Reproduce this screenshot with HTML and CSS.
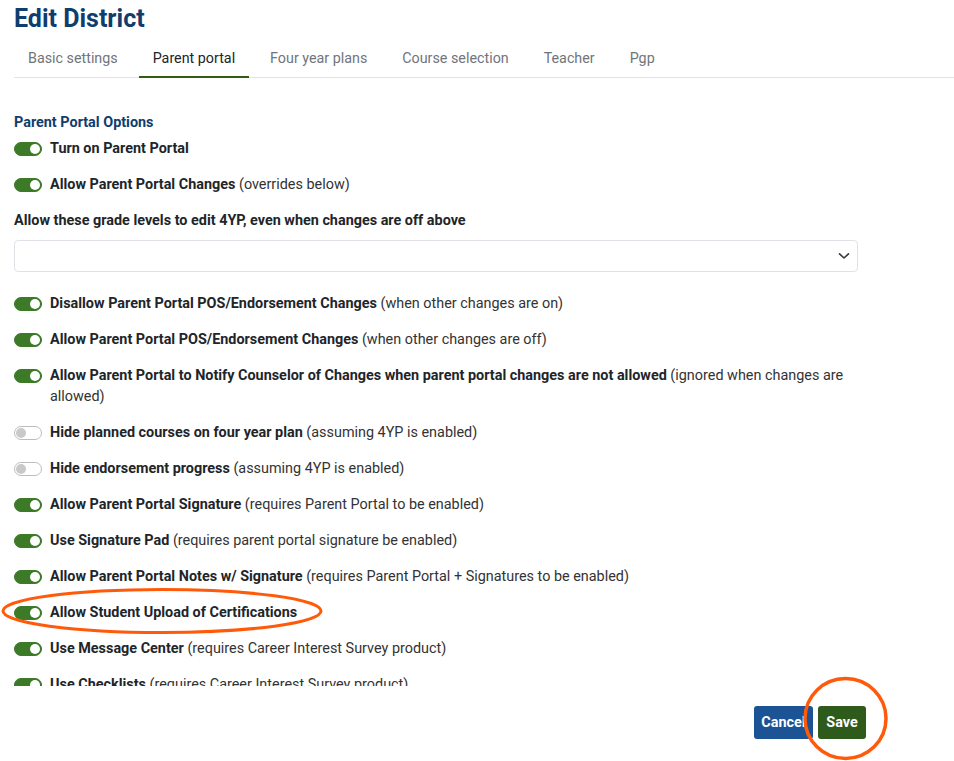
FILE: index.html
```html
<!DOCTYPE html>
<html lang="en">
<head>
<meta charset="utf-8">
<title>Edit District</title>
<link rel="stylesheet" href="styles.css">
</head>
<body>
<div class="page">
  <h1 class="title">Edit District</h1>
  <nav class="tabs">
    <span class="tab">Basic settings</span>
    <span class="tab active">Parent portal</span>
    <span class="tab">Four year plans</span>
    <span class="tab">Course selection</span>
    <span class="tab">Teacher</span>
    <span class="tab">Pgp</span>
  </nav>
  <div class="pane">
    <h2 class="section">Parent Portal Options</h2>
    <div class="opt"><span class="sw on"></span><span class="lbl"><b>Turn on Parent Portal</b></span></div>
    <div class="opt"><span class="sw on"></span><span class="lbl"><b>Allow Parent Portal Changes</b> (overrides below)</span></div>
    <div class="field">
      <div class="field-label">Allow these grade levels to edit 4YP, even when changes are off above</div>
      <div class="select">
        <svg class="chev" width="12" height="8" viewBox="0 0 12 8"><path d="M1.5 1.8 L6 6 L10.5 1.8" fill="none" stroke="#343a40" stroke-width="1.6" stroke-linecap="round" stroke-linejoin="round"/></svg>
      </div>
    </div>
    <div class="opt"><span class="sw on"></span><span class="lbl"><b>Disallow Parent Portal POS/Endorsement Changes</b> (when other changes are on)</span></div>
    <div class="opt"><span class="sw on"></span><span class="lbl"><b>Allow Parent Portal POS/Endorsement Changes</b> (when other changes are off)</span></div>
    <div class="opt"><span class="sw on"></span><span class="lbl"><b>Allow Parent Portal to Notify Counselor of Changes when parent portal changes are not allowed</b> (ignored when changes are allowed)</span></div>
    <div class="opt"><span class="sw"></span><span class="lbl"><b>Hide planned courses on four year plan</b> (assuming 4YP is enabled)</span></div>
    <div class="opt"><span class="sw"></span><span class="lbl"><b>Hide endorsement progress</b> (assuming 4YP is enabled)</span></div>
    <div class="opt"><span class="sw on"></span><span class="lbl"><b>Allow Parent Portal Signature</b> (requires Parent Portal to be enabled)</span></div>
    <div class="opt"><span class="sw on"></span><span class="lbl"><b>Use Signature Pad</b> (requires parent portal signature be enabled)</span></div>
    <div class="opt"><span class="sw on"></span><span class="lbl"><b>Allow Parent Portal Notes w/ Signature</b> (requires Parent Portal + Signatures to be enabled)</span></div>
    <div class="opt"><span class="sw on"></span><span class="lbl"><b>Allow Student Upload of Certifications</b></span></div>
    <div class="opt"><span class="sw on"></span><span class="lbl"><b>Use Message Center</b> (requires Career Interest Survey product)</span></div>
    <div class="opt"><span class="sw on"></span><span class="lbl"><b>Use Checklists</b> (requires Career Interest Survey product)</span></div>
    <div class="opt"><span class="sw on"></span><span class="lbl"><b>Use Goals</b> (requires Career Interest Survey product)</span></div>
  </div>
  <div class="footer">
    <button class="btn cancel">Cancel</button>
    <button class="btn save">Save</button>
  </div>
</div>
<svg class="marks" width="954" height="761" viewBox="0 0 954 761">
  <ellipse cx="162" cy="611" rx="159" ry="21.5" fill="none" stroke="#ff5a0a" stroke-width="3"/>
  <ellipse cx="845.5" cy="718.5" rx="40.5" ry="40" fill="none" stroke="#ff5a0a" stroke-width="3.5"/>
</svg>
</body>
</html>
```
FILE: styles.css
```css
* { box-sizing: border-box; }
html, body { margin: 0; padding: 0; background: #fff; }
body {
  font-family: Roboto, "Liberation Sans", sans-serif;
  font-size: 14.4px;
  color: #212529;
  width: 954px;
  height: 761px;
  overflow: hidden;
  position: relative;
}
.page { padding: 0 0 0 14px; }
.title {
  margin: 4px 0 0;
  font-size: 25px;
  line-height: 30px;
  font-weight: 700;
  color: #0f3d6e;
}
.tabs {
  display: flex;
  gap: 7px;
  margin-top: 4px;
  border-bottom: 1px solid #e3e3e3;
}
.tab {
  padding: 10px 14px 8px;
  font-size: 14.3px;
  line-height: 20px;
  color: #6f757b;
  border-bottom: 2px solid transparent;
  margin-bottom: -1px;
}
.tab.active {
  color: #212529;
  border-bottom-color: #2f5d14;
}
.pane {
  height: 608px;
  overflow: hidden;
  padding-top: 34px;
  width: 844px;
}
.section {
  margin: 0 0 5px;
  font-size: 14.4px;
  line-height: 21px;
  font-weight: 700;
  color: #0f3d6e;
}
.opt {
  display: flex;
  align-items: flex-start;
  gap: 8px;
  line-height: 21px;
  margin-bottom: 15px;
  color: #333;
}
.opt b { color: #212529; font-weight: 700; }
.lbl { flex: 1; }
.sw {
  flex: none;
  position: relative;
  width: 28px;
  height: 14px;
  margin-top: 3.5px;
  border-radius: 7px;
  background: #fff;
  border: 1px solid #bdbdbd;
}
.sw::after {
  content: "";
  position: absolute;
  top: 1px;
  left: 1px;
  width: 10px;
  height: 10px;
  border-radius: 50%;
  background: #c9c9c9;
}
.sw.on { background: #3d7a27; border-color: #3d7a27; }
.sw.on::after { left: auto; right: 1px; background: #fff; }
.field { margin-bottom: 21.5px; }
.field-label {
  font-weight: 700;
  line-height: 21px;
  margin-bottom: 8.5px;
}
.select {
  height: 32px;
  border: 1px solid #dee2e6;
  border-radius: 4px;
  display: flex;
  align-items: center;
  justify-content: flex-end;
  padding-right: 7px;
}
.chev { display: block; }
.footer {
  display: flex;
  justify-content: flex-end;
  gap: 5px;
  padding: 20px 88px 0 0;
}
.btn {
  height: 33px;
  border: none;
  border-radius: 3px;
  color: #fff;
  font-family: Roboto, "Liberation Sans", sans-serif;
  font-size: 14.4px;
  font-weight: 700;
  padding: 0 6px;
  white-space: nowrap;
  overflow: hidden;
}
.cancel { background: #1b5394; width: 59px; }
.save { background: #2e5a1b; width: 48px; }
.marks {
  position: absolute;
  left: 0;
  top: 0;
  pointer-events: none;
}
```
